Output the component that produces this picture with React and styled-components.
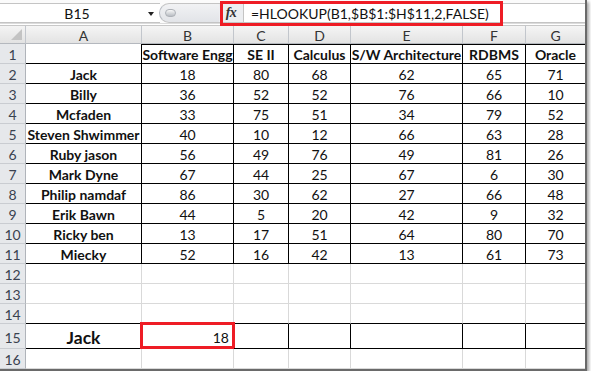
import React from "react";
import styled, { createGlobalStyle, css } from "styled-components";

const Global = createGlobalStyle`
  html, body { margin: 0; padding: 0; background: #ffffff; }
  body { font-family: Lato, "Liberation Sans", sans-serif; }
`;

const COLS = [116, 92, 55, 62, 112, 63, 60];
const LETTERS = ["A", "B", "C", "D", "E", "F", "G"];
const HEAD = ["", "Software Engg", "SE II", "Calculus", "S/W Architecture", "RDBMS", "Oracle"];
const DATA = [
  ["Jack", 18, 80, 68, 62, 65, 71],
  ["Billy", 36, 52, 52, 76, 66, 10],
  ["Mcfaden", 33, 75, 51, 34, 79, 52],
  ["Steven Shwimmer", 40, 10, 12, 66, 63, 28],
  ["Ruby jason", 56, 49, 76, 49, 81, 26],
  ["Mark Dyne", 67, 44, 25, 67, 6, 30],
  ["Philip namdaf", 86, 30, 62, 27, 66, 48],
  ["Erik Bawn", 44, 5, 20, 42, 9, 32],
  ["Ricky ben", 13, 17, 51, 64, 80, 70],
  ["Miecky", 52, 16, 42, 13, 61, 73],
];

const Window = styled.div`
  width: 587px;
  height: 371px;
  box-sizing: border-box;
  overflow: hidden;
  background: #fff;
  border-right: 2px solid #6a6a6a;
  border-bottom: 2px solid #6a6a6a;
  box-shadow: 2px 2px 3px rgba(0, 0, 0, 0.35);
  display: flex;
  flex-direction: column;
`;

const FormulaBar = styled.div`
  position: relative;
  height: 25px;
  box-sizing: border-box;
  padding-top: 3px;
  display: flex;
  align-items: stretch;
  background: #fbfbfb;
`;

const barPart = css`
  box-sizing: border-box;
  border-top: 1px solid #c4c4c4;
  border-bottom: 1px solid #c4c4c4;
`;

const NameBox = styled.div`
  ${barPart};
  width: 160px;
  background: #fff;
  display: flex;
  align-items: center;
  font-size: 14px;
  color: #111;
`;

const NameText = styled.span`
  flex: 1;
  text-align: center;
  padding-left: 6px;
  padding-top: 1px;
`;

const DropArrow = styled.span`
  width: 0;
  height: 0;
  border-left: 3.5px solid transparent;
  border-right: 3.5px solid transparent;
  border-top: 4px solid #222;
  margin-right: 6px;
  margin-top: 1px;
`;

const Grip = styled.div`
  ${barPart};
  width: 60px;
  margin-left: -1px;
  background: linear-gradient(#f1f2f4, #e2e4e8);
  border-left: 1px solid #b8bcc2;
  border-radius: 11px 0 0 11px;
  display: flex;
  align-items: center;
  padding-left: 5px;
`;

const GripKnob = styled.span`
  width: 9px;
  height: 6px;
  border-radius: 4px;
  background: linear-gradient(#f8f8f8, #b9bdc3);
  border: 1px solid #aeb2b8;
`;

const FxButton = styled.div`
  ${barPart};
  width: 25px;
  background: #eceef1;
  border-right: 1px solid #c4c4c4;
  display: flex;
  align-items: center;
  justify-content: center;
  font-family: "Liberation Serif", serif;
  font-style: italic;
  font-weight: bold;
  font-size: 14px;
  color: #333;
  letter-spacing: -0.5px;
`;

const FormulaInput = styled.div`
  ${barPart};
  flex: 1;
  background: #fff;
  display: flex;
  align-items: center;
  padding-left: 7px;
  padding-top: 1px;
  font-size: 14px;
  color: #111;
`;

const Highlight = styled.div`
  position: absolute;
  left: 220px;
  top: 1px;
  width: 283px;
  height: 25px;
  box-sizing: border-box;
  border: 3px solid #ee1c25;
  pointer-events: none;
`;

const Spacer = styled.div`
  height: 4px;
  background: #fff;
  border-top: 1px solid #dcdcdc;
  box-sizing: border-box;
`;

const Sheet = styled.div`
  display: grid;
  grid-template-columns: 26px ${COLS.map((c) => c + "px").join(" ")};
  grid-template-rows: 19px repeat(14, 20px) 25px 20px;
`;

const headerBase = css`
  box-sizing: border-box;
  display: flex;
  align-items: center;
  justify-content: center;
  font-size: 14px;
  padding-top: 1px;
  border-right: 1px solid #c2c6cc;
  border-bottom: 1px solid #b4b8be;
`;

const Corner = styled.div`
  ${headerBase};
  position: relative;
  background: linear-gradient(#f4f4f4, #e2e2e2);
  border-top: 1px solid #c8c8c8;
  &::after {
    content: "";
    position: absolute;
    right: 3px;
    bottom: 3px;
    width: 0;
    height: 0;
    border-left: 11px solid transparent;
    border-bottom: 11px solid #c3c3c3;
  }
`;

const ColHeader = styled.div`
  ${headerBase};
  background: linear-gradient(#f5f5f5, #e3e3e3);
  border-top: 1px solid #c8c8c8;
  color: #333;
`;

const RowHeader = styled.div`
  ${headerBase};
  background: #e6e8eb;
  color: #3a4250;
  padding-top: 2px;
  border-bottom: 1px solid #c9ccd1;
  border-right: 1px solid #b0b4ba;
`;

const Cell = styled.div`
  position: relative;
  box-sizing: border-box;
  display: flex;
  align-items: center;
  justify-content: ${(p) => (p.$align === "right" ? "flex-end" : "center")};
  padding: 2px ${(p) => (p.$align === "right" ? "4px" : "0")} 0 0;
  white-space: nowrap;
  overflow: visible;
  font-size: ${(p) => p.$size || 14}px;
  font-weight: ${(p) => (p.$bold ? 700 : 400)};
  color: #111;
  border-right: 1px solid ${(p) => (p.$br ? "#000" : "#d9d9d9")};
  border-bottom: 1px solid ${(p) => (p.$bb ? "#000" : "#d9d9d9")};
  box-shadow: ${(p) => (p.$bt ? "inset 0 1px 0 #000" : "none")};
  ${(p) =>
    p.$selected &&
    css`
      &::after {
        content: "";
        position: absolute;
        left: -2px;
        top: -2px;
        right: -2px;
        bottom: -1px;
        border: 3px solid #ee1c25;
        pointer-events: none;
      }
    `}
`;

function rowCells(r) {
  if (r === 1) {
    return HEAD.map((h, i) => (
      <Cell key={i} $bold $br $bb $bt={i > 0}>
        {h}
      </Cell>
    ));
  }
  if (r >= 2 && r <= 11) {
    return DATA[r - 2].map((v, i) => (
      <Cell key={i} $bold={i === 0} $br $bb>
        {v}
      </Cell>
    ));
  }
  if (r === 14) {
    return LETTERS.map((l, i) => <Cell key={i} $bb />);
  }
  if (r === 15) {
    return LETTERS.map((l, i) => {
      if (i === 0)
        return (
          <Cell key={i} $bold $size={17.5} $br $bb>
            Jack
          </Cell>
        );
      if (i === 1)
        return (
          <Cell key={i} $align="right" $br $bb $selected>
            18
          </Cell>
        );
      return <Cell key={i} $br $bb />;
    });
  }
  return LETTERS.map((l, i) => <Cell key={i} />);
}

export default function App() {
  const rows = Array.from({ length: 16 }, (_, i) => i + 1);
  return (
    <>
      <Global />
      <Window>
        <FormulaBar>
          <NameBox>
            <NameText>B15</NameText>
            <DropArrow />
          </NameBox>
          <Grip>
            <GripKnob />
          </Grip>
          <FxButton>fx</FxButton>
          <FormulaInput>=HLOOKUP(B1,$B$1:$H$11,2,FALSE)</FormulaInput>
          <Highlight />
        </FormulaBar>
        <Spacer />
        <Sheet>
          <Corner />
          {LETTERS.map((l) => (
            <ColHeader key={l}>{l}</ColHeader>
          ))}
          {rows.map((r) => (
            <React.Fragment key={r}>
              <RowHeader>{r}</RowHeader>
              {rowCells(r)}
            </React.Fragment>
          ))}
        </Sheet>
      </Window>
    </>
  );
}
